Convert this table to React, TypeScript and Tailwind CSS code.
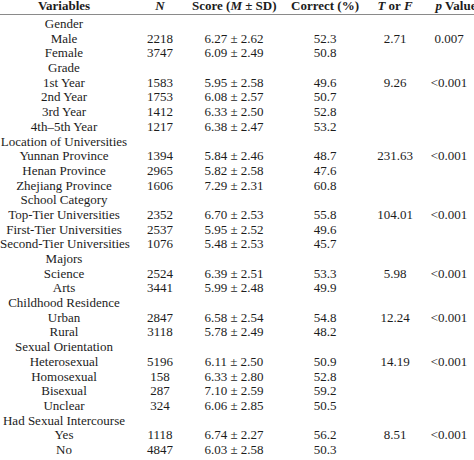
import React from 'react';

type Row = [string, string?, string?, string?, string?, string?];

const rows: Row[] = [
  ['Gender'],
  ['Male', '2218', '6.27 ± 2.62', '52.3', '2.71', '0.007'],
  ['Female', '3747', '6.09 ± 2.49', '50.8'],
  ['Grade'],
  ['1st Year', '1583', '5.95 ± 2.58', '49.6', '9.26', '<0.001'],
  ['2nd Year', '1753', '6.08 ± 2.57', '50.7'],
  ['3rd Year', '1412', '6.33 ± 2.50', '52.8'],
  ['4th–5th Year', '1217', '6.38 ± 2.47', '53.2'],
  ['Location of Universities'],
  ['Yunnan Province', '1394', '5.84 ± 2.46', '48.7', '231.63', '<0.001'],
  ['Henan Province', '2965', '5.82 ± 2.58', '47.6'],
  ['Zhejiang Province', '1606', '7.29 ± 2.31', '60.8'],
  ['School Category'],
  ['Top-Tier Universities', '2352', '6.70 ± 2.53', '55.8', '104.01', '<0.001'],
  ['First-Tier Universities', '2537', '5.95 ± 2.52', '49.6'],
  ['Second-Tier Universities', '1076', '5.48 ± 2.53', '45.7'],
  ['Majors'],
  ['Science', '2524', '6.39 ± 2.51', '53.3', '5.98', '<0.001'],
  ['Arts', '3441', '5.99 ± 2.48', '49.9'],
  ['Childhood Residence'],
  ['Urban', '2847', '6.58 ± 2.54', '54.8', '12.24', '<0.001'],
  ['Rural', '3118', '5.78 ± 2.49', '48.2'],
  ['Sexual Orientation'],
  ['Heterosexual', '5196', '6.11 ± 2.50', '50.9', '14.19', '<0.001'],
  ['Homosexual', '158', '6.33 ± 2.80', '52.8'],
  ['Bisexual', '287', '7.10 ± 2.59', '59.2'],
  ['Unclear', '324', '6.06 ± 2.85', '50.5'],
  ['Had Sexual Intercourse'],
  ['Yes', '1118', '6.74 ± 2.27', '56.2', '8.51', '<0.001'],
  ['No', '4847', '6.03 ± 2.58', '50.3'],
];

const cols = 'grid grid-cols-[128px_64px_84px_98px_42px_66px] text-center';

export default function App() {
  return (
    <div className="w-[474px] h-[460px] overflow-hidden bg-white text-[#1c1c1c] text-[13px] font-['Liberation_Serif',serif]">
      <div className={`${cols} h-[15px] leading-[12px] font-bold border-b border-[#8a8a8a] whitespace-nowrap`}>
        <div>Variables</div>
        <div><i>N</i></div>
        <div>Score (<i>M</i> ± SD)</div>
        <div>Correct (%)</div>
        <div><i>T</i> or <i>F</i></div>
        <div className="pl-[14px]"><i>p</i> Value</div>
      </div>
      <div className="pt-[2px]">
        {rows.map((r, i) => (
          <div key={i} className={`${cols} leading-[14.69px] whitespace-nowrap`}>
            {r.map((c, j) => (
              <div key={j}>{c ?? ''}</div>
            ))}
          </div>
        ))}
      </div>
    </div>
  );
}
